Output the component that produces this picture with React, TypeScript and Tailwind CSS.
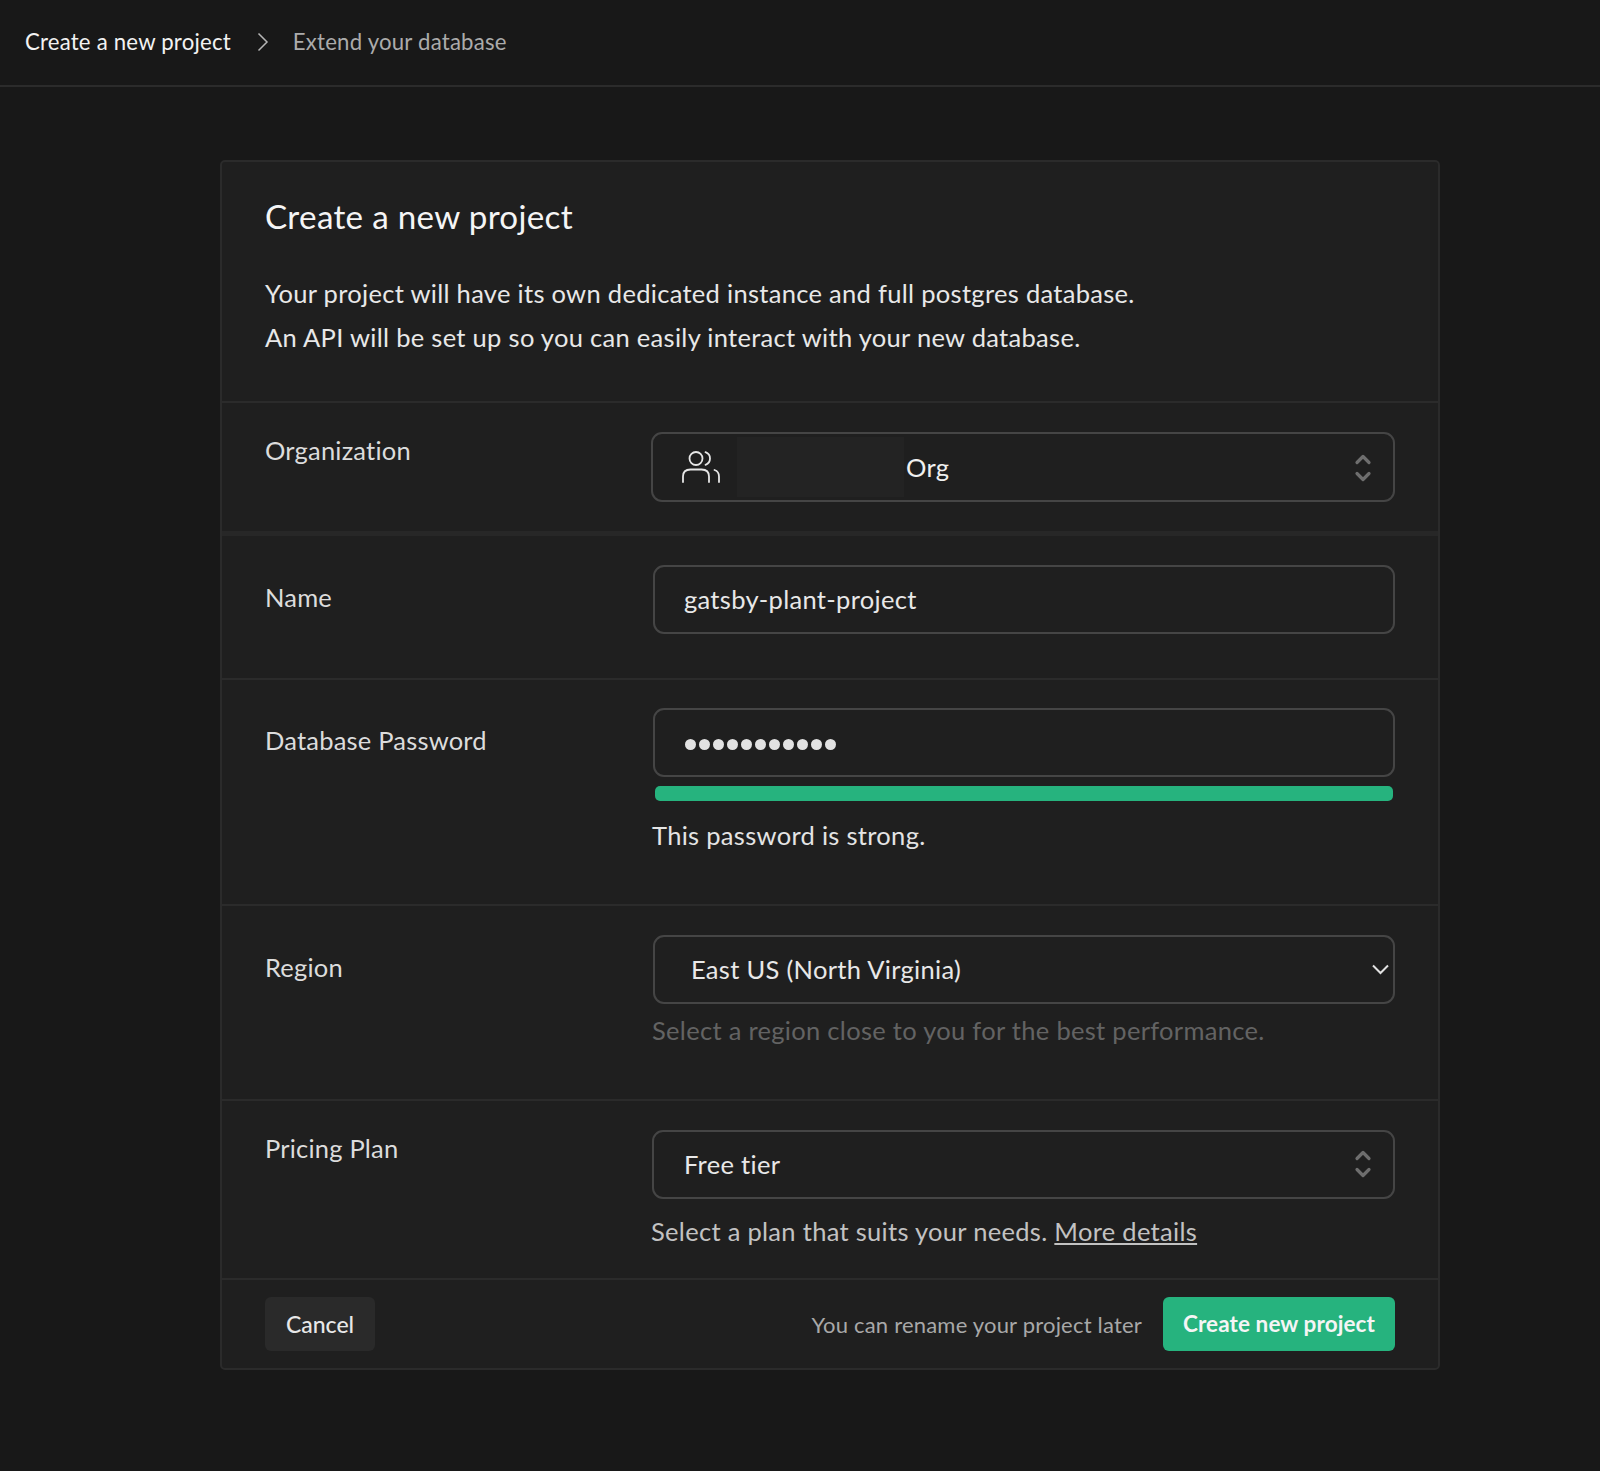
const Chevrons = () => (
  <svg width="18" height="30" viewBox="0 0 18 30" fill="none" stroke="#6e6e6e" strokeWidth="3.2" strokeLinecap="round" strokeLinejoin="round">
    <path d="M3 9.5L9 3.5L15 9.5" />
    <path d="M3 20.5L9 26.5L15 20.5" />
  </svg>
);

const Dots = () => (
  <div className="flex gap-[3px] pt-[3px]">
    {Array.from({ length: 11 }).map((_, i) => (
      <span key={i} className="h-[11px] w-[11px] rounded-full bg-[#e2e2e2]" />
    ))}
  </div>
);

const inputBox = "flex h-[69px] items-center rounded-[11px] border-2 border-[#454545] text-[25.5px] tracking-[0.3px] text-[#e8e8e8]";

const App = () => {
  return (
    <div className="min-h-[1471px] bg-[#181818] font-['Lato',sans-serif] text-[#ededed]">
      {/* Top breadcrumb */}
      <header className="flex h-[87px] items-center border-b-2 border-[#2b2b2b] pb-[1px] pl-[25px] text-[22.2px] tracking-[0.2px]">
        <span className="text-[#f2f2f2]">Create a new project</span>
        <svg className="ml-[26px] mr-[24px]" width="12" height="20" viewBox="0 0 12 20" fill="none" stroke="#b5b5b5" strokeWidth="1.5">
          <path d="M1.5 1.5L10 10L1.5 18.5" />
        </svg>
        <span className="text-[#ababab]">Extend your database</span>
      </header>

      <main className="flex justify-center pl-[60px] pt-[73px]">
        <div className="w-[1220px] rounded-[5px] border-2 border-[#2b2b2b] bg-[#1f1f1f]">
          {/* Intro */}
          <section className="h-[241px] border-b-2 border-[#2b2b2b] px-[43px] pt-[32px]">
            <h1 className="text-[33.2px] leading-[44px] tracking-[0.3px] text-[#f5f5f5]">Create a new project</h1>
            <p className="mt-[33px] text-[25.5px] leading-[44px] tracking-[0.3px] text-[#e8e8e8]">
              Your project will have its own dedicated instance and full postgres database.
              <br />
              An API will be set up so you can easily interact with your new database.
            </p>
          </section>

          {/* Organization */}
          <section className="flex h-[133px] border-b-[5px] border-[#272727] pl-[43px] pr-[43px] pt-[29px]">
            <label className="mt-[1px] w-[386px] text-[25.5px] leading-[34px] tracking-[0.2px] text-[#dcdcdc]">Organization</label>
            <div className={`${inputBox} relative !h-[70px] flex-1`}>
              <svg className="ml-[28px]" width="40" height="34" viewBox="0 0 40 34" fill="none" stroke="#e6e6e6" strokeWidth="1.8" strokeLinecap="round">
                <circle cx="15" cy="8.5" r="6.5" />
                <path d="M24.5 2.2C27.5 3.3 29 5.6 29 8.5C29 11.4 27.5 13.7 24.5 14.8" />
                <path d="M2 32V26.5C2 22 5 19.5 9.5 19.5H20.5C25 19.5 28 22 28 26.5V32" />
                <path d="M33.5 20C36.5 21 38 23 38 26.5V32" />
              </svg>
              <div className="ml-[16px] h-[60px] w-[167px] bg-[#232323]" />
              <span className="ml-[2px] text-[#f0f0f0]">Org</span>
              <div className="absolute right-[21px] top-[19px]">
                <Chevrons />
              </div>
            </div>
          </section>

          {/* Name */}
          <section className="flex h-[144px] border-b-2 border-[#2b2b2b] pl-[43px] pr-[43px] pt-[29px]">
            <label className="mt-[15px] w-[388px] text-[25.5px] leading-[34px] tracking-[0.2px] text-[#dcdcdc]">Name</label>
            <div className={`${inputBox} flex-1 pl-[29px]`}>gatsby-plant-project</div>
          </section>

          {/* Database password */}
          <section className="flex h-[226px] border-b-2 border-[#2b2b2b] pl-[43px] pr-[43px] pt-[28px]">
            <label className="mt-[15px] w-[388px] text-[25.5px] leading-[34px] tracking-[0.2px] text-[#dcdcdc]">Database Password</label>
            <div className="flex-1">
              <div className={`${inputBox} pl-[30px]`}>
                <Dots />
              </div>
              <div className="mx-[2px] mt-[9px] h-[15px] rounded-[5px] bg-[#26b37e]" />
              <p className="-ml-[1px] mt-[17px] text-[25.5px] leading-[34px] tracking-[0.3px] text-[#e4e4e4]">This password is strong.</p>
            </div>
          </section>

          {/* Region */}
          <section className="flex h-[195px] border-b-2 border-[#2b2b2b] pl-[43px] pr-[43px] pt-[29px]">
            <label className="mt-[15px] w-[388px] text-[25.5px] leading-[34px] tracking-[0.2px] text-[#dcdcdc]">Region</label>
            <div className="flex-1">
              <div className={`${inputBox} relative pl-[36px]`}>
                East US (North Virginia)
                <svg className="absolute right-[4px] top-[27px]" width="17" height="11" viewBox="0 0 17 11" fill="none" stroke="#e2e2e2" strokeWidth="2">
                  <path d="M1 1.5L8.5 9L16 1.5" />
                </svg>
              </div>
              <p className="-ml-[1px] mt-[9px] text-[25.5px] leading-[34px] tracking-[0.3px] text-[#636363]">Select a region close to you for the best performance.</p>
            </div>
          </section>

          {/* Pricing plan */}
          <section className="flex h-[179px] border-b-2 border-[#2b2b2b] pl-[43px] pr-[43px] pt-[29px]">
            <label className="mt-[1px] w-[387px] text-[25.5px] leading-[34px] tracking-[0.2px] text-[#dcdcdc]">Pricing Plan</label>
            <div className="flex-1">
              <div className={`${inputBox} relative pl-[30px]`}>
                Free tier
                <div className="absolute right-[21px] top-[17px]">
                  <Chevrons />
                </div>
              </div>
              <p className="-ml-[1px] mt-[15px] text-[25.5px] leading-[34px] tracking-[0.3px] text-[#c2c2c2]">
                Select a plan that suits your needs. <span className="underline">More details</span>
              </p>
            </div>
          </section>

          {/* Footer */}
          <footer className="flex h-[88px] items-center justify-between pl-[43px] pr-[43px]">
            <button className="h-[54px] w-[110px] rounded-[6px] bg-[#2a2a2a] text-[23px] font-medium text-[#e8e8e8]">Cancel</button>
            <div className="flex items-center">
              <span className="mr-[21px] text-[22px] tracking-[0.2px] text-[#a8a8a8]">You can rename your project later</span>
              <button className="h-[54px] w-[232px] rounded-[6px] bg-[#26b37e] text-[22.5px] font-bold tracking-[0.1px] text-[#f5f5f5]">Create new project</button>
            </div>
          </footer>
        </div>
      </main>
    </div>
  );
};

export default App;
